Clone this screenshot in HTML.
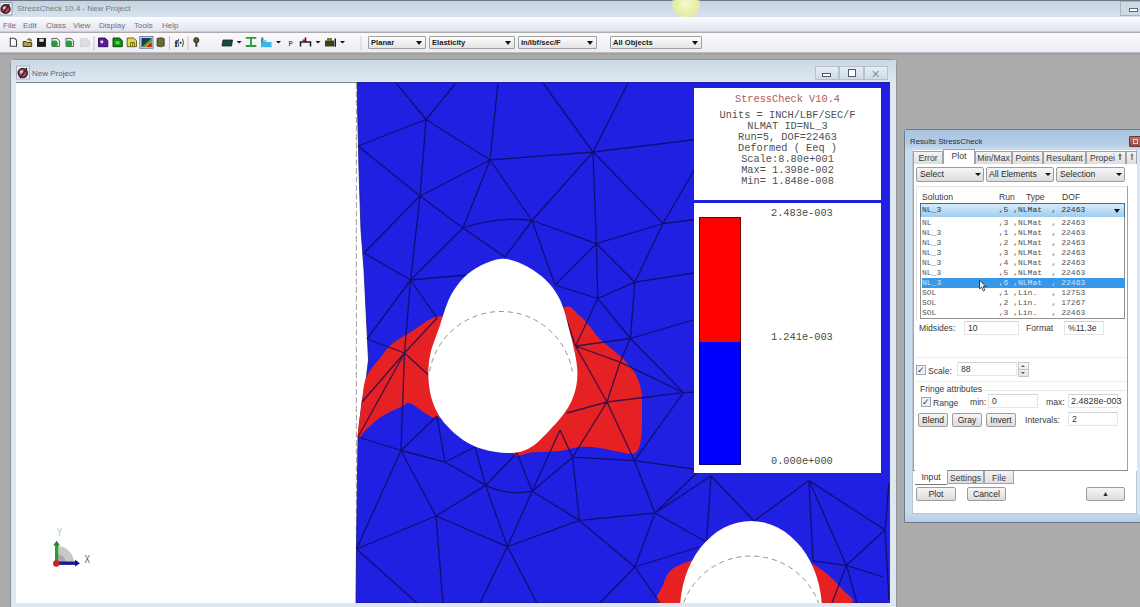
<!DOCTYPE html>
<html><head><meta charset="utf-8">
<style>
*{margin:0;padding:0;box-sizing:border-box}
html,body{width:1140px;height:607px;overflow:hidden}
body{position:relative;background:#ababab;font-family:"Liberation Sans",sans-serif;font-size:11px;color:#222}
.a{position:absolute}
#title{left:0;top:0;width:1140px;height:17px;background:linear-gradient(#c6d2de,#d6e2ec);border-top:1px solid #6b7686}
#menu{left:0;top:17px;width:1140px;height:15px;background:linear-gradient(#fbfdff,#e3e3ee);border-bottom:1px solid #cdcdd6}
#menu span{position:absolute;top:3.5px;color:#6e6e78;font-size:8px}
#tool{left:0;top:33px;width:1140px;height:20px;background:linear-gradient(#fafafd,#ececf4);border-bottom:1px solid #b9b9bf}
#band{left:0;top:53px;width:1140px;height:2px;background:#a2a2a4}
.cb{position:absolute;top:36px;height:13px;background:linear-gradient(#fdfdfd,#e4e4e4);border:1px solid #a0a0a0;border-radius:1px;font-weight:bold;font-size:7.6px;color:#1a1a1a;padding-left:2px;line-height:11px}
.cb:after{content:"";position:absolute;right:3.5px;top:4px;border-left:3px solid transparent;border-right:3px solid transparent;border-top:4px solid #111}
.ic{position:absolute;top:37px;width:11px;height:11px}
.dd{position:absolute;top:41px;border-left:3px solid transparent;border-right:3px solid transparent;border-top:3px solid #111}
.sep{position:absolute;top:36px;width:1px;height:14px;background:#c8c8cc}
#child{left:10px;top:59px;width:887px;height:560px;background:#dfe7f0;border:1px solid #8c949e;border-radius:5px 5px 0 0}
#ctitle{left:11px;top:60px;width:885px;height:22px;background:linear-gradient(#ccd8e4,#dde7f1)}
#canvas{left:16px;top:81px;width:874px;height:522px;background:#fff;border-top:1px solid #e6eaf4}
#cline{left:16px;top:82px;width:341px;height:1px;background:#7a8088}
.wb{position:absolute;top:66px;height:14px;border:1px solid #b7c1cc;background:linear-gradient(#e6eef6,#d0dbe6)}
#dlg{left:904px;top:129px;width:240px;height:393.5px;background:linear-gradient(90deg,#c9dcee,#d8e6f3);border:1px solid #6f7b88;border-radius:3px 0 0 0}
#dbody{left:912px;top:150px;width:225px;height:364px;background:#fff;border:1px solid #b8c4d0;border-top:none}
#dtitle{left:905px;top:130px;width:240px;height:20px;background:linear-gradient(#a8c4e0,#b4cce6 70%,#c8dcf0)}
#panel{left:913px;top:163px;width:224px;height:308px;background:#fff;border:1px solid #9fa4aa;border-right:none;border-bottom:none}
.tab{position:absolute;height:13px;background:linear-gradient(#f4f4f4,#dedede);border:1px solid #a3a3a3;border-bottom:none;font-size:8.6px;color:#3a3a3a;text-align:center;line-height:13px;white-space:nowrap;overflow:hidden}
.btn{position:absolute;height:14px;background:linear-gradient(#f6f6f6,#dcdcdc);border:1px solid #9c9c9c;border-radius:2px;font-size:8.6px;color:#2a2a2a;text-align:center;line-height:12px;white-space:nowrap}
.tb{position:absolute;height:14px;background:#fff;border:1px solid #e4e5e8;border-top-color:#cfd2d6;font-size:8.6px;color:#333;padding-left:3px;line-height:12px;white-space:nowrap}
.lbl{position:absolute;font-size:8.6px;color:#3a3a3a;white-space:nowrap}
.mono{font-family:"Liberation Mono",monospace}
#list{left:920px;top:217px;width:205px;height:102px;background:#fff;border:1px solid #8f8f8f;border-top:none}
.row{position:absolute;left:1px;width:203px;height:10px;font-family:"Liberation Mono",monospace;font-size:8px;line-height:10px;color:#555;white-space:pre}
</style></head><body>
<!-- title bar -->
<div id="title" class="a"></div>
<svg class="a" style="left:0;top:1px" width="13" height="15" viewBox="0 0 13 15"><rect x="0" y="1.5" width="12" height="12.5" fill="#f4f0f4" stroke="#8a8aa0" stroke-width="0.8"/><circle cx="5.6" cy="8" r="4.3" fill="#c04058" stroke="#2a2030" stroke-width="1.6"/><circle cx="4.6" cy="7" r="1.6" fill="#f0c0d0"/><path d="M9.5,3.2 L3,12" stroke="#2a2030" stroke-width="1.4"/></svg>
<div class="a" style="left:17px;top:4px;font-size:8px;color:#707b88">StressCheck 10.4 - New Project</div>
<div class="a" style="left:1120px;top:1px;width:20px;height:15px;border:1px solid #a8b4c2;border-right:none;background:#cdd9e5"></div>
<div class="a" style="left:1129px;top:8px;width:9px;height:4px;background:#fff;border:1px solid #666"></div>
<div class="a" style="left:672px;top:-10px;width:28px;height:28px;border-radius:50%;background:radial-gradient(#f4f8d8 0%,#e9efa0 50%,rgba(230,236,140,0.2) 100%)"></div>
<!-- menu -->
<div id="menu" class="a">
<span style="left:3px">File</span><span style="left:23px">Edit</span><span style="left:46px">Class</span><span style="left:73px">View</span><span style="left:99px">Display</span><span style="left:134px">Tools</span><span style="left:162px">Help</span>
</div>
<!-- toolbar -->
<div id="tool" class="a"></div>
<div id="band" class="a"></div>
<svg class="a" style="left:0;top:33px" width="370" height="20" viewBox="0 33 370 20">
<!-- new doc -->
<path d="M10.3,38.3h4.2l2,2v6h-6.2z" fill="#fff" stroke="#444" stroke-width="1.1"/>
<!-- open folder -->
<path d="M23.2,41.5h3l1,1h4.5v4h-8.5z" fill="#a8a050" stroke="#404018" stroke-width="1"/>
<path d="M27,40l2.5,-1.5l2.2,1.6l-1,1.4" fill="#c0a020" stroke="#4a4a10" stroke-width="0.8"/>
<!-- save -->
<rect x="37.5" y="38.4" width="8" height="8" fill="#1a1a1a" stroke="#111" stroke-width="0.8"/>
<rect x="39.3" y="38.8" width="4.4" height="3" fill="#e0e0e0"/>
<!-- green 1 -->
<path d="M52,38.4h5l2.6,2.4v5.7h-7.6z" fill="#e6eee6" stroke="#555" stroke-width="0.9"/>
<circle cx="54.6" cy="43.6" r="3.2" fill="#20a030"/>
<!-- green 2 -->
<path d="M66,38.4h5l2.6,2.4v5.7h-7.6z" fill="#e6eee6" stroke="#555" stroke-width="0.9"/>
<circle cx="69" cy="43.6" r="3.2" fill="#20a030"/>
<!-- gray disabled -->
<path d="M80.5,38.5h6l3,2.5v5.5h-9z" fill="#dedee2" stroke="#d0d0d4" stroke-width="0.8"/>
<rect x="93.5" y="36" width="1" height="14" fill="#c4c4ca"/>
<!-- purple -->
<path d="M98.5,38h6.5l2.8,2.6v6.1h-9.3z" fill="#5a1a9a" stroke="#2a0a50" stroke-width="0.9"/>
<circle cx="101.8" cy="41.8" r="1.6" fill="#f0c8ff"/>
<!-- green square -->
<path d="M113,38h6.5l2.8,2.6v6.1h-9.3z" fill="#109010" stroke="#053a05" stroke-width="0.9"/>
<rect x="115.5" y="41.2" width="4" height="3" fill="#50e050"/>
<!-- yellow -->
<path d="M127.2,38h6.5l2.8,2.6v6.1h-9.3z" fill="#e0d850" stroke="#5a5a10" stroke-width="0.9"/>
<path d="M130.5,46.5v-4h4v4 M132.5,42.5v4" fill="none" stroke="#5a5a10" stroke-width="0.8"/>
<!-- pressed colorful -->
<rect x="139.8" y="36.5" width="13.2" height="11.8" fill="#d0d8ea" stroke="#7480a0" stroke-width="1"/>
<rect x="141.5" y="38" width="10" height="9" fill="#1a3a5a"/>
<path d="M141.5,47l10,-9v2.5l-7.5,6.5z" fill="#40a030"/>
<path d="M144,47l7.5,-6.5v2l-5,4.5z" fill="#e0a020"/>
<path d="M146.5,47l5,-4.5v4.5z" fill="#c02020"/>
<!-- olive shield -->
<path d="M157,38.5l3.7,-0.8l3.5,0.8v7.5l-3.5,0.8l-3.7,-0.8z" fill="#6a6a38" stroke="#3a3a1a" stroke-width="0.8"/>
<rect x="169" y="36" width="1" height="14" fill="#c4c4ca"/>
<!-- f(x) -->
<text x="174.5" y="46.5" font-family="Liberation Serif" font-size="10" font-weight="bold" fill="#111">f</text>
<path d="M178.8,38.8q-1.8,4 0,8 M182.5,38.8q1.8,4 0,8" fill="none" stroke="#333" stroke-width="0.9"/>
<circle cx="180.6" cy="42.8" r="1.1" fill="#444"/>
<rect x="187.5" y="36" width="1" height="14" fill="#c4c4ca"/>
<!-- key -->
<circle cx="196.3" cy="40.2" r="2.6" fill="#5a5a38" stroke="#2a2a14" stroke-width="0.8"/>
<rect x="195.4" y="42" width="1.9" height="4.8" fill="#3a3a22"/>
<!-- parallelogram -->
<path d="M223,40h9.5l-1,6h-9.5z" fill="#1a4a3c" stroke="#0a2a20" stroke-width="0.8"/>
<path d="M236.7,41h5l-2.5,2.4z" fill="#111"/>
<!-- I beam -->
<path d="M245.8,37.8h10.5M245.8,46h10.5M251,37.8v8.2" stroke="#2a9a3a" stroke-width="1.8"/>
<!-- cyan block -->
<rect x="261" y="42" width="10.5" height="5.2" fill="#38b8e0"/>
<rect x="261" y="37.6" width="2.5" height="5" fill="#4a80b0"/>
<rect x="263.5" y="40" width="3" height="2" fill="#7acce8"/>
<path d="M276,41h5l-2.5,2.4z" fill="#111"/>
<!-- P -->
<text x="288.4" y="45.5" font-family="Liberation Sans" font-size="6.5" font-weight="bold" fill="#8a30a8">P</text>
<!-- support -->
<path d="M300.5,46.5v-4.5h10v4.5 M305.5,42v-4.5" fill="none" stroke="#1a1a1a" stroke-width="1.5"/>
<rect x="302.5" y="39.5" width="2.5" height="1.8" fill="#c02020"/>
<path d="M315.5,41h5l-2.5,2.4z" fill="#111"/>
<!-- olive box -->
<rect x="325" y="40.5" width="9" height="6" fill="#3e3e1e"/>
<rect x="327" y="38" width="5" height="3" fill="#6a8030"/>
<rect x="334.5" y="38.5" width="1.5" height="8.2" fill="#1a1a1a"/>
<path d="M340,41h5l-2.5,2.4z" fill="#111"/>
<rect x="360.5" y="36" width="1" height="14" fill="#d0d0d6"/>
</svg>

<div class="cb" style="left:368px;width:58px">Planar</div>
<div class="cb" style="left:429px;width:86px">Elasticity</div>
<div class="cb" style="left:518px;width:79px">in/lbf/sec/F</div>
<div class="cb" style="left:610px;width:92px">All Objects</div>

<!-- child window -->
<div id="child" class="a"></div>
<div id="ctitle" class="a"></div>
<svg class="a" style="left:16px;top:65px" width="14" height="15" viewBox="0 0 14 15"><rect x="0.5" y="1" width="13" height="13" fill="#eef0f6" stroke="#9aa4b4" stroke-width="0.8"/><circle cx="6.8" cy="8" r="4.5" fill="#c04050" stroke="#2a2a3a" stroke-width="1.6"/><circle cx="5.6" cy="7" r="1.7" fill="#f0c0cc"/><path d="M11,3 L4,13" stroke="#2a2a3a" stroke-width="1.4"/></svg>
<div class="a" style="left:32px;top:69px;font-size:8px;color:#5c6470">New Project</div>
<div class="wb" style="left:815px;width:24px"></div>
<div class="wb" style="left:839px;width:25px"></div>
<div class="wb" style="left:864px;width:24px"></div>
<div class="a" style="left:822px;top:73px;width:9px;height:4px;border:1px solid #556;background:#fff"></div>
<div class="a" style="left:848px;top:69px;width:8px;height:8px;border:1px solid #556;background:#fff"></div>
<div class="a" style="left:871px;top:68px;font-size:11px;color:#8a96a6">✕</div>
<div id="canvas" class="a"></div>
<div id="cline" class="a"></div>

<!-- MESH -->
<svg class="a" style="left:0;top:0" width="1140" height="607" viewBox="0 0 1140 607">
<svg x="16" y="82" width="874" height="521" viewBox="16 82 874 521" overflow="hidden">
<line x1="356.4" y1="83" x2="356.4" y2="603" stroke="#959595" stroke-width="0.9" stroke-dasharray="6,2.5"/>
<path d="M357.4,82.0 L889.5,82.0 L889.5,603.0 L356.0,603.0 L356.5,550.0 L358.0,437.0 L362.0,402.0 L365.5,385.0 L368.5,360.0 L366.0,310.0 L364.0,270.0 L361.0,230.0 L359.0,170.0 L357.6,110.0Z" fill="#2020e2" stroke="#14148a" stroke-width="0.8"/>
<path d="M366.4,377.0 C369.7,369.3 377.4,361.5 381.7,356.0 C386.0,350.5 387.2,348.0 392.0,344.0 C396.8,340.0 403.0,336.6 410.7,332.0 C418.4,327.4 430.2,316.7 438.4,316.4 C446.6,316.1 456.4,316.1 460.0,330.0 C463.6,343.9 463.8,385.3 460.0,400.0 C456.2,414.7 445.2,417.4 437.0,418.0 C428.8,418.6 416.4,405.5 410.7,403.5 C405.0,401.5 407.6,403.8 402.8,406.0 C398.0,408.2 387.9,412.6 381.7,416.6 C375.5,420.6 369.8,426.6 365.8,430.0 C361.9,433.4 358.6,441.7 358.0,437.0 C357.4,432.3 360.6,412.0 362.0,402.0 C363.4,392.0 363.1,384.7 366.4,377.0Z" fill="#e52124"/>
<path d="M565.3,307.0 C571.7,304.5 574.6,311.8 578.5,314.8 C582.4,317.8 585.4,321.2 588.9,325.2 C592.4,329.1 594.6,333.8 599.3,338.5 C604.0,343.2 612.1,348.9 617.0,353.3 C621.9,357.8 625.7,361.6 628.9,365.2 C632.1,368.8 634.0,370.9 636.0,375.0 C638.0,379.1 640.0,383.9 641.0,389.6 C642.0,395.3 642.0,401.2 642.0,409.4 C642.0,417.6 642.2,431.8 641.0,439.0 C639.8,446.2 638.6,450.8 635.0,452.9 C631.4,455.0 625.2,452.7 619.3,451.9 C613.4,451.1 606.1,448.8 599.5,448.0 C592.9,447.2 586.4,446.5 579.8,447.0 C573.2,447.5 567.9,450.1 560.0,451.0 C552.1,451.9 540.4,451.8 532.7,452.3 C525.0,452.8 515.8,459.4 513.7,454.0 C511.6,448.6 515.6,440.7 520.0,420.0 C524.4,399.3 532.5,348.8 540.0,330.0 C547.5,311.2 558.9,309.5 565.3,307.0Z" fill="#e52124"/>
<path d="M659.5,603.0 C651.7,600.0 661.2,590.3 663.0,585.0 C664.8,579.7 666.8,574.5 670.0,571.0 C673.2,567.5 677.9,565.9 682.0,564.0 C686.1,562.1 688.2,561.0 694.5,559.7 C700.8,558.4 717.4,548.8 720.0,556.0 C722.6,563.2 720.1,595.2 710.0,603.0 C699.9,610.8 667.3,606.0 659.5,603.0Z" fill="#e52124"/>
<path d="M790.0,556.0 C792.1,549.5 805.9,560.7 812.5,564.0 C819.1,567.3 824.6,571.8 829.5,576.0 C834.4,580.2 838.4,584.5 842.0,589.0 C845.6,593.5 858.0,600.7 851.0,603.0 C844.0,605.3 810.2,610.8 800.0,603.0 C789.8,595.2 787.9,562.5 790.0,556.0Z" fill="#e52124"/>
<path d="M396.0,83.0L426.0,119.5 M426.0,119.5L456.0,83.0 M426.0,119.5L358.0,146.0 M426.0,119.5L420.0,196.0 M426.0,119.5L490.0,160.0 M490.0,160.0L498.0,83.0 M490.0,160.0L593.0,152.0 M420.0,196.0L358.0,146.0 M490.0,160.0L420.0,196.0 M490.0,160.0L463.0,228.0 M490.0,160.0L532.0,220.5 M420.0,196.0L463.0,228.0 M420.0,196.0L364.0,253.0 M420.0,196.0L410.6,280.0 M463.0,228.0L410.6,280.0 M532.0,220.5L593.0,152.0 M532.0,220.5L596.4,243.7 M593.0,152.0L543.0,83.0 M593.0,152.0L628.0,83.0 M593.0,152.0L700.0,139.0 M593.0,152.0L663.0,223.5 M593.0,152.0L596.4,243.7 M663.0,223.5L700.0,160.0 M663.0,223.5L700.0,219.0 M663.0,223.5L634.8,282.2 M596.4,243.7L663.0,223.5 M410.6,280.0L364.0,253.0 M410.6,280.0L467.0,275.0 M410.6,280.0L367.0,339.0 M410.6,280.0L404.5,353.0 M410.6,280.0L437.0,318.0 M463.0,228.0L505.0,257.0 M532.0,220.5L505.0,257.0 M532.0,220.5L555.0,285.0 M596.4,243.7L555.0,285.0 M596.4,243.7L634.8,282.2 M596.4,243.7L597.8,298.5 M597.8,298.5L555.0,285.0 M597.8,298.5L634.8,282.2 M597.8,298.5L630.4,338.5 M634.8,282.2L630.4,338.5 M634.8,282.2L700.0,272.0 M597.8,298.5L575.6,346.0 M575.6,346.0L566.0,318.0 M575.6,346.0L630.4,338.5 M630.4,338.5L620.0,362.2 M575.6,346.0L620.0,362.2 M630.4,338.5L700.0,318.0 M620.0,362.2L607.0,402.0 M607.0,402.0L575.6,346.0 M607.0,402.0L567.0,413.0 M607.0,402.0L683.5,392.6 M620.0,362.2L683.5,392.6 M630.4,338.5L683.5,392.6 M404.5,353.0L367.0,339.0 M404.5,353.0L437.0,318.0 M404.5,353.0L362.0,402.0 M404.5,353.0L428.5,375.0 M404.5,353.0L401.0,450.5 M404.5,353.0L358.0,437.0 M401.0,450.5L358.0,437.0 M401.0,450.5L437.0,416.0 M401.0,450.5L445.0,462.0 M445.0,462.0L437.0,416.0 M445.0,462.0L475.0,447.0 M445.0,462.0L485.6,485.4 M485.6,485.4L475.0,447.0 M485.6,485.4L517.0,453.0 M485.6,485.4L436.0,516.0 M401.0,450.5L436.0,516.0 M401.0,450.5L356.5,549.0 M436.0,516.0L356.5,549.0 M436.0,516.0L443.0,603.0 M436.0,516.0L507.4,546.6 M485.6,485.4L507.4,546.6 M507.4,546.6L532.2,491.2 M532.2,491.2L517.0,453.0 M532.2,491.2L560.0,430.0 M532.2,491.2L572.6,457.2 M572.6,457.2L560.0,430.0 M572.6,457.2L607.0,402.0 M572.6,457.2L634.5,460.7 M607.0,402.0L634.5,460.7 M634.5,460.7L683.5,392.6 M634.5,460.7L655.0,513.0 M572.6,457.2L579.4,520.4 M532.2,491.2L579.4,520.4 M507.4,546.6L579.4,520.4 M579.4,520.4L655.0,513.0 M579.4,520.4L634.8,567.0 M655.0,513.0L634.8,567.0 M507.4,546.6L537.0,603.0 M356.5,549.0L417.0,603.0 M507.4,546.6L480.0,603.0 M634.8,567.0L600.0,603.0 M683.5,392.6L700.0,392.0 M634.5,460.7L700.0,470.0 M655.0,513.0L700.0,470.0 M634.8,567.0L660.0,603.0 M634.8,567.0L699.0,547.0 M655.0,513.0L711.0,476.0 M809.0,480.6L885.0,530.0 M809.0,480.6L846.4,565.3 M809.0,480.6L813.0,561.0 M809.0,480.6L754.0,521.0 M711.0,476.0L655.0,513.0 M711.0,476.0L706.5,542.0 M711.0,476.0L754.0,521.0 M655.0,513.0L706.5,542.0 M885.0,530.0L846.4,565.3 M846.4,565.3L883.0,577.0 M846.4,565.3L857.0,603.0 M846.4,565.3L832.0,603.0 M846.4,565.3L813.0,561.0 M885.0,530.0L889.0,483.0 M885.0,530.0L889.0,600.0 M463.0,228.0Q497.0,216.0 532.0,220.5 M485.6,485.4Q508.0,496.0 532.2,491.2" stroke="#0a0a50" stroke-width="1.3" fill="none" stroke-opacity="0.75"/>
<path d="M430.4,353.8 L431.3,350.1 L432.4,346.5 L433.6,342.9 L434.9,339.4 L436.2,335.8 L437.5,332.3 L438.8,328.7 L440.1,324.9 L441.3,321.1 L442.6,317.1 L443.9,312.9 L445.3,308.5 L447.0,304.1 L448.8,299.6 L451.0,295.1 L453.5,290.7 L456.4,286.4 L459.6,282.2 L463.2,278.2 L467.1,274.6 L471.3,271.2 L475.9,268.2 L480.7,265.6 L485.7,263.3 L490.9,261.2 L496.3,259.5 L501.8,258.7 L507.3,259.1 L512.8,260.4 L518.1,262.3 L523.1,264.6 L528.0,267.1 L532.7,269.8 L537.2,272.9 L541.4,276.1 L545.3,279.6 L548.9,283.3 L552.3,287.3 L555.3,291.4 L557.9,295.7 L560.2,300.1 L562.1,304.7 L563.7,309.2 L565.1,313.7 L566.3,318.1 L567.4,322.3 L568.4,326.5 L569.4,330.5 L570.4,334.4 L571.4,338.2 L572.3,342.0 L573.2,345.8 L574.1,349.5 L574.9,353.3 L575.6,357.1 L576.3,361.0 L576.8,364.9 L577.2,368.8 L577.4,372.8 L577.3,376.8 L577.1,380.8 L576.5,384.8 L575.7,388.8 L574.6,392.7 L573.3,396.6 L571.8,400.4 L570.0,404.1 L568.0,407.7 L565.7,411.1 L563.3,414.5 L560.8,417.7 L558.1,420.9 L555.4,424.0 L552.5,427.1 L549.6,430.2 L546.6,433.4 L543.5,436.6 L540.3,439.8 L536.9,442.9 L533.2,445.8 L529.3,448.3 L525.0,450.3 L520.6,451.7 L516.0,452.5 L511.4,452.9 L506.8,452.9 L502.2,452.7 L497.6,452.2 L493.1,451.6 L488.6,450.7 L484.2,449.6 L479.9,448.3 L475.6,446.7 L471.5,444.8 L467.6,442.7 L463.8,440.4 L460.1,437.8 L456.6,435.1 L453.3,432.3 L450.2,429.3 L447.2,426.1 L444.3,422.9 L441.7,419.5 L439.3,415.9 L437.2,412.3 L435.3,408.5 L433.6,404.6 L432.3,400.7 L431.1,396.7 L430.2,392.7 L429.5,388.7 L429.0,384.7 L428.6,380.7 L428.4,376.8 L428.3,372.9 L428.4,369.0 L428.7,365.1 L429.1,361.3 L429.6,357.5Z" fill="#fff"/>
<ellipse cx="751" cy="611" rx="71" ry="90" fill="#fff"/>
<path d="M429.6,371.4 A72.5,72.5 0 0 1 572.4,371.4" fill="none" stroke="#909090" stroke-width="1" stroke-dasharray="5,4"/>
<circle cx="751" cy="628" r="72" fill="none" stroke="#909090" stroke-width="1" stroke-dasharray="5,4"/>
<line x1="357" y1="83" x2="889.5" y2="83" stroke="#2222a0" stroke-width="1.6"/>
<line x1="357" y1="99" x2="889" y2="99" stroke="#3a3ad0" stroke-width="1" stroke-dasharray="4,3" opacity="0.35"/>
</svg></svg>

<!-- info/legend -->
<div class="a" style="left:694px;top:88px;width:187px;height:111.5px;background:#fff"></div>
<div class="a mono" style="left:693px;top:93.5px;width:189px;text-align:center;font-size:10.3px;line-height:10.95px;color:#505050;white-space:pre"><span style="color:#b05858">StressCheck V10.4</span>
<span style="display:block;height:5.5px"></span>Units = INCH/LBF/SEC/F
NLMAT ID=NL_3
Run=5, DOF=22463
Deformed ( Eeq )
Scale:8.80e+001
Max= 1.398e-002
Min= 1.848e-008</div>
<div class="a" style="left:694px;top:202.5px;width:187px;height:270px;background:#fff"></div>
<div class="a" style="left:699px;top:217px;width:42px;height:125px;background:#ff0000;border:1px solid #7a0000;border-bottom:none"></div>
<div class="a" style="left:699px;top:341.5px;width:42px;height:123.5px;background:#0000ff;border:1px solid #00007a;border-top:none"></div>
<div class="a mono" style="left:771px;top:207px;font-size:10.3px;color:#4a4a4a">2.483e-003</div>
<div class="a mono" style="left:771px;top:331px;font-size:10.3px;color:#4a4a4a">1.241e-003</div>
<div class="a mono" style="left:771px;top:455px;font-size:10.3px;color:#4a4a4a">0.000e+000</div>


<!-- dialog -->
<div id="dlg" class="a"></div>
<div id="dtitle" class="a"></div>
<div id="dbody" class="a"></div>
<div class="a" style="left:905px;top:514px;width:235px;height:7.5px;background:linear-gradient(#c4d8ec,#b4cce6)"></div>
<div class="a" style="left:910px;top:137px;font-size:7.8px;color:#1e3050">Results StressCheck</div>
<div class="a" style="left:1129px;top:136px;width:14px;height:11px;background:linear-gradient(#b87068,#9a4a40);border:1px solid #6a3a38;border-radius:1px"></div>
<div class="a" style="left:1133px;top:139px;width:5px;height:5px;border:1px solid #e8c8c0"></div>
<div id="panel" class="a"></div>
<!-- tabs -->
<div class="tab" style="left:913px;top:151px;width:30px">Error</div>
<div class="tab" style="left:943px;top:149px;width:32px;height:15px;background:#fff;z-index:2">Plot</div>
<div class="tab" style="left:975px;top:151px;width:37px">Min/Max</div>
<div class="tab" style="left:1012px;top:151px;width:31px">Points</div>
<div class="tab" style="left:1043px;top:151px;width:43px">Resultant</div>
<div class="tab" style="left:1086px;top:151px;width:40px;text-align:left;padding-left:3px">Propei</div>
<div class="a" style="left:1119px;top:154px;width:2px;height:6px;background:#888"></div><div class="a" style="left:1118px;top:153px;border-left:2px solid transparent;border-right:2px solid transparent;border-bottom:3px solid #777"></div>
<div class="tab" style="left:1126px;top:151px;width:11px"></div><div class="a" style="left:1130.5px;top:154px;width:2px;height:6px;background:#999"></div><div class="a" style="left:1129.5px;top:153px;border-left:2px solid transparent;border-right:2px solid transparent;border-bottom:3px solid #888"></div>
<!-- select combos -->
<div class="btn" style="left:916px;top:167px;width:68px;height:15px;text-align:left;padding-left:3px">Select</div>
<div class="btn" style="left:986px;top:167px;width:68px;height:15px;text-align:left;padding-left:2px">All Elements</div>
<div class="btn" style="left:1056px;top:167px;width:69px;height:15px;text-align:left;padding-left:3px">Selection</div>
<div class="a" style="left:975px;top:173px;border-left:3px solid transparent;border-right:3px solid transparent;border-top:3px solid #111"></div>
<div class="a" style="left:1045px;top:173px;border-left:3px solid transparent;border-right:3px solid transparent;border-top:3px solid #111"></div>
<div class="a" style="left:1116px;top:173px;border-left:3px solid transparent;border-right:3px solid transparent;border-top:3px solid #111"></div>
<!-- solution header -->
<div class="a" style="left:916px;top:186px;width:211px;height:135px;border:1px solid #e4e4e4;border-bottom:none;border-right:none"></div>
<div class="lbl" style="left:922px;top:192px">Solution</div>
<div class="lbl" style="left:999px;top:192px">Run</div>
<div class="lbl" style="left:1026px;top:192px">Type</div>
<div class="lbl" style="left:1062px;top:192px">DOF</div>
<div class="a" style="left:920px;top:203px;width:205px;height:15px;background:linear-gradient(#d6ebfa,#9fcdef);border:1px solid #3d6f9c"></div>
<div class="row" style="left:922px;top:205px;width:190px;color:#333">NL_3            ,5 ,NLMat  , 22463</div>
<div class="a" style="left:1114px;top:209px;border-left:3.5px solid transparent;border-right:3.5px solid transparent;border-top:4px solid #111"></div>
<div id="list" class="a" style="padding-left:1px">
<div class="row" style="top:1px">NL              ,3 ,NLMat  , 22463</div>
<div class="row" style="top:11px">NL_3            ,1 ,NLMat  , 22463</div>
<div class="row" style="top:21px">NL_3            ,2 ,NLMat  , 22463</div>
<div class="row" style="top:31px">NL_3            ,3 ,NLMat  , 22463</div>
<div class="row" style="top:41px">NL_3            ,4 ,NLMat  , 22463</div>
<div class="row" style="top:51px">NL_3            ,5 ,NLMat  , 22463</div>
<div class="row" style="top:61px;background:#3797e8;color:#cfe4f8">NL_3            ,6 ,NLMat  , 22463</div>
<div class="row" style="top:71px">SOL             ,1 ,Lin.   , 12753</div>
<div class="row" style="top:81px">SOL             ,2 ,Lin.   , 17267</div>
<div class="row" style="top:91px">SOL             ,3 ,Lin.   , 22463</div>
</div>
<div class="lbl" style="left:919px;top:323px">Midsides:</div>
<div class="tb" style="left:964px;top:321px;width:55px">10</div>
<div class="lbl" style="left:1026px;top:323px">Format</div>
<div class="tb" style="left:1064px;top:321px;width:40px">%11.3e</div>
<div class="a" style="left:916px;top:357px;width:211px;height:1px;background:#eee"></div>
<div class="a" style="left:916px;top:365px;width:10px;height:10px;border:1px solid #9aa;background:#f0f0f4;font-size:9px;line-height:8px;color:#335">&#10003;</div>
<div class="lbl" style="left:928px;top:366px">Scale:</div>
<div class="tb" style="left:957px;top:362px;width:60px">88</div>
<div class="a" style="left:1018px;top:362px;width:11px;height:15px;border:1px solid #c2c6cc;background:linear-gradient(#f8f8f8,#e4e4e4)"></div>
<div class="a" style="left:1018px;top:369px;width:11px;height:1px;background:#c2c6cc"></div>
<div class="a" style="left:1021px;top:365px;border-left:2.5px solid transparent;border-right:2.5px solid transparent;border-bottom:2.5px solid #556"></div>
<div class="a" style="left:1021px;top:372px;border-left:2.5px solid transparent;border-right:2.5px solid transparent;border-top:2.5px solid #556"></div>
<div class="a" style="left:916px;top:381px;width:211px;height:1px;background:#eee"></div>
<div class="lbl" style="left:920px;top:384px">Fringe attributes</div>
<div class="a" style="left:985px;top:390px;width:140px;height:1px;background:#e6e6e6"></div>
<div class="a" style="left:921px;top:397px;width:10px;height:10px;border:1px solid #9aa;background:#f0f0f4;font-size:9px;line-height:8px;color:#335">&#10003;</div>
<div class="lbl" style="left:933px;top:398px">Range</div>
<div class="lbl" style="left:970px;top:397px">min:</div>
<div class="tb" style="left:988px;top:394px;width:50px">0</div>
<div class="lbl" style="left:1046px;top:397px">max:</div>
<div class="tb" style="left:1068px;top:394px;width:50px;font-size:9px;padding-left:2px">2.4828e-003</div>
<div class="btn" style="left:918px;top:413px;width:30px">Blend</div>
<div class="btn" style="left:952px;top:413px;width:30px">Gray</div>
<div class="btn" style="left:986px;top:413px;width:30px">Invert</div>
<div class="lbl" style="left:1025px;top:415px">Intervals:</div>
<div class="tb" style="left:1068px;top:412px;width:50px">2</div>
<!-- bottom tabs -->
<div class="a" style="left:1127px;top:186px;width:1px;height:285px;background:#9fa4aa"></div>
<div class="a" style="left:913px;top:470px;width:215px;height:1px;background:#8a8a8a"></div>
<div class="a" style="left:915px;top:470px;width:32px;height:15px;background:#fff;border-bottom:1px solid #777;font-size:8.6px;color:#333;text-align:center;line-height:15px">Input</div>
<div class="tab" style="left:947px;top:471px;width:37px;border-top:none;border-bottom:1px solid #a3a3a3;line-height:14px">Settings</div>
<div class="tab" style="left:984px;top:471px;width:30px;border-top:none;border-bottom:1px solid #a3a3a3;line-height:14px">File</div>
<div class="btn" style="left:916px;top:487px;width:40px">Plot</div>
<div class="btn" style="left:967px;top:487px;width:39px">Cancel</div>
<div class="btn" style="left:1086px;top:487px;width:39px;font-size:7px">&#9650;</div>


<!-- axis triad -->
<svg class="a" style="left:30px;top:520px" width="80" height="60" viewBox="30 520 80 60">
<path d="M57,563 L57,546 A17,17 0 0 1 74,563 Z" fill="#c8c8c8"/>
<path d="M57,563 L57,554 A9,9 0 0 1 66,563 Z" fill="#a9a9a9"/>
<rect x="55" y="545" width="3.2" height="18" fill="#2aa02a"/>
<path d="M53.2,545.5 L56.6,540.8 L60,545.5 Z" fill="#1e8a1e"/>
<rect x="56" y="561.5" width="19" height="3.4" fill="#1a1a9a"/>
<path d="M75,559.8 L80,563.2 L75,566.6 Z" fill="#10108a"/>
<circle cx="56.3" cy="563.5" r="3.2" fill="#d02020"/>
<text x="57" y="536.3" font-family="Liberation Sans" font-size="11" fill="#a8cca8" transform="translate(57,0) scale(0.7,1) translate(-57,0)">Y</text>
<text x="84.5" y="563.5" font-family="Liberation Sans" font-size="11" fill="#5a5a7a" transform="translate(84.5,0) scale(0.75,1) translate(-84.5,0)">X</text>
</svg>
<!-- mouse pointer -->
<svg class="a" style="left:975px;top:278px" width="16" height="22" viewBox="975 278 16 22">
<path d="M979.5,280 L979.5,289 L981.5,287.2 L983.2,291 L984.8,290.2 L983.2,286.6 L986,286.6 Z" fill="#fff" stroke="#222" stroke-width="0.9" opacity="0.85"/>
</svg>
</body></html>
